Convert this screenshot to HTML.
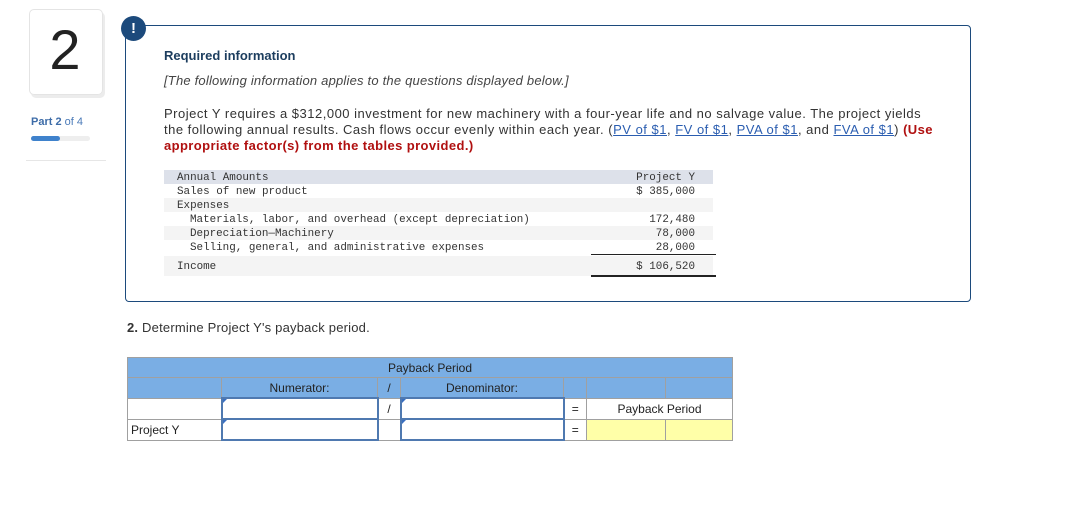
<!DOCTYPE html>
<html><head><style>
body{margin:0;width:1087px;height:522px;background:#fff;font-family:"Liberation Sans",sans-serif;position:relative;overflow:hidden;color:#333}
.abs{position:absolute}
.mono{font-family:"Liberation Mono",monospace;font-size:10.9px;color:#333}
.r{position:absolute;left:164px;width:549px;height:14px}
.r span{position:absolute;top:1px;line-height:14px}
.r .v{right:18px}
table{border-collapse:collapse;position:absolute;left:127px;top:357px;font-size:12px;color:#222}
td{border:1px solid #a0a0a0;height:19px;padding:0;text-align:center}
.h td{background:#7aaee4}
.in{border:2px solid #4f79b0 !important;background:#fff;position:relative}
.in:before{content:"";position:absolute;left:0;top:0;border-left:4px solid #3a6fc0;border-bottom:4px solid transparent}
</style></head><body>
<div class="abs" style="left:29px;top:9px;width:72px;height:84px;border:1px solid #e4e4e4;border-radius:5px;box-shadow:2px 3px 0 #ececec"></div>
<div class="abs" style="left:29px;top:18px;width:72px;text-align:center;font-size:56px;color:#222;line-height:64px">2</div>
<div class="abs" style="left:31px;top:116px;font-size:11px;color:#4a7ab8"><b style="color:#3d6ca8">Part 2</b> of 4</div>
<div class="abs" style="left:31px;top:136px;width:59px;height:5px;background:#eee;border-radius:3px"><div style="width:29px;height:5px;background:#3f82cc;border-radius:3px"></div></div>
<div class="abs" style="left:26px;top:160px;width:80px;height:1px;background:#e6e6e6"></div>

<div class="abs" style="left:125px;top:25px;width:844px;height:275px;border:1px solid #1c4a7c;border-radius:4px"></div>
<div class="abs" style="left:121px;top:16px;width:25px;height:25px;border-radius:50%;background:#1c4a7c;color:#fff;font-weight:bold;font-size:15px;text-align:center;line-height:25px">!</div>
<div class="abs" style="left:164px;top:48px;font-size:13px;font-weight:bold;color:#1c3d5e">Required information</div>
<div class="abs" style="left:164px;top:73px;font-size:13px;font-style:italic;color:#444;letter-spacing:0.2px">[The following information applies to the questions displayed below.]</div>
<div class="abs" style="left:164px;top:106px;width:800px;font-size:13px;line-height:16px;color:#333;letter-spacing:0.5px;white-space:nowrap">Project Y requires a $312,000 investment for new machinery with a four-year life and no salvage value. The project yields<br>the following annual results. Cash flows occur evenly within each year. (<u style="color:#2a5db0">PV of $1</u>, <u style="color:#2a5db0">FV of $1</u>, <u style="color:#2a5db0">PVA of $1</u>, and <u style="color:#2a5db0">FVA of $1</u>) <b style="color:#b01010;letter-spacing:0.4px">(Use<br>appropriate factor(s) from the tables provided.)</b></div>

<div class="mono">
<div class="r" style="top:170px;background:#dde1ea"><span style="left:13px">Annual Amounts</span><span class="v">Project Y</span></div>
<div class="r" style="top:184px"><span style="left:13px">Sales of new product</span><span class="v">$ 385,000</span></div>
<div class="r" style="top:198px;background:#f4f4f4"><span style="left:13px">Expenses</span></div>
<div class="r" style="top:212px"><span style="left:26px">Materials, labor, and overhead (except depreciation)</span><span class="v">172,480</span></div>
<div class="r" style="top:226px;background:#f4f4f4"><span style="left:26px">Depreciation—Machinery</span><span class="v">78,000</span></div>
<div class="r" style="top:240px"><span style="left:26px">Selling, general, and administrative expenses</span><span class="v">28,000</span></div>
<div class="abs" style="left:591px;top:254px;width:125px;height:1px;background:#222"></div>
<div class="r" style="top:256px;height:20px;background:#f4f4f4"><span style="left:13px;line-height:20px">Income</span><span class="v" style="line-height:20px">$ 106,520</span></div>
<div class="abs" style="left:591px;top:275px;width:125px;height:2px;background:#222"></div>
</div>

<div class="abs" style="left:127px;top:320px;font-size:13px;color:#333;letter-spacing:0.2px"><b>2.</b> Determine Project Y's payback period.</div>

<table>
<tr class="h"><td colspan="7">Payback Period</td></tr>
<tr class="h"><td style="width:93px"></td><td style="width:155px">Numerator:</td><td style="width:22px">/</td><td style="width:162px">Denominator:</td><td style="width:22px"></td><td style="width:78px"></td><td style="width:66px"></td></tr>
<tr><td></td><td class="in"></td><td>/</td><td class="in"></td><td>=</td><td colspan="2">Payback Period</td></tr>
<tr><td style="text-align:left;padding-left:3px">Project Y</td><td class="in"></td><td></td><td class="in"></td><td>=</td><td style="background:#ffffa8"></td><td style="background:#ffffa8"></td></tr>
</table>
</body></html>
